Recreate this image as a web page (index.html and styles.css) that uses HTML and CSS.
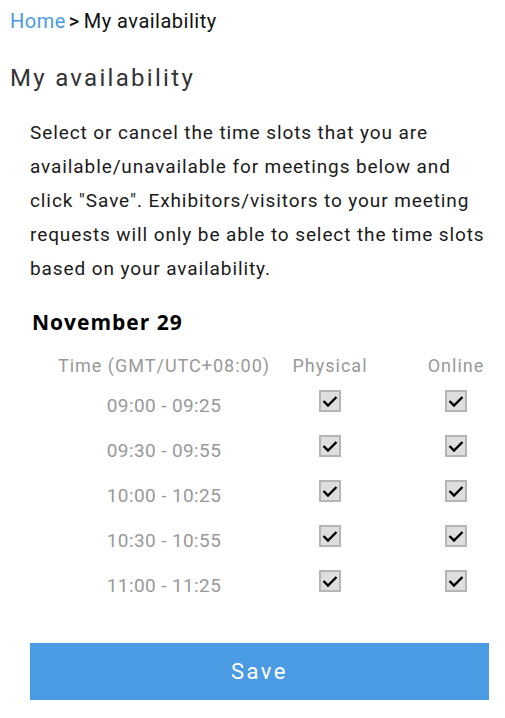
FILE: index.html
```html
<!DOCTYPE html>
<html lang="en">
<head>
    <meta charset="UTF-8">
    <title>My availability</title>
    <link rel="stylesheet" href="styles.css">
</head>
<body>
    <div class="breadcrumb">
        <a href="#" class="crumb-link">Home</a><span class="crumb-sep">&gt;</span><span class="crumb-current">My availability</span>
    </div>

    <h1 class="page-title">My availability</h1>

    <div class="content">
        <p class="intro">Select or cancel the time slots that you are available/unavailable for meetings below and click "Save". Exhibitors/visitors to your meeting requests will only be able to select the time slots based on your availability.</p>

        <h2 class="day-title">November 29</h2>

        <div class="slots">
            <div class="slot-row slot-head">
                <div class="cell">Time (GMT/UTC+08:00)</div>
                <div class="cell">Physical</div>
                <div class="cell cell-online">Online</div>
            </div>
            <div class="slot-row">
                <div class="cell time">09:00 - 09:25</div>
                <div class="cell"><span class="check"><svg viewBox="0 0 18 18"><polyline points="2.5,9 7,13.5 15.5,5"/></svg></span></div>
                <div class="cell cell-online"><span class="check"><svg viewBox="0 0 18 18"><polyline points="2.5,9 7,13.5 15.5,5"/></svg></span></div>
            </div>
            <div class="slot-row">
                <div class="cell time">09:30 - 09:55</div>
                <div class="cell"><span class="check"><svg viewBox="0 0 18 18"><polyline points="2.5,9 7,13.5 15.5,5"/></svg></span></div>
                <div class="cell cell-online"><span class="check"><svg viewBox="0 0 18 18"><polyline points="2.5,9 7,13.5 15.5,5"/></svg></span></div>
            </div>
            <div class="slot-row">
                <div class="cell time">10:00 - 10:25</div>
                <div class="cell"><span class="check"><svg viewBox="0 0 18 18"><polyline points="2.5,9 7,13.5 15.5,5"/></svg></span></div>
                <div class="cell cell-online"><span class="check"><svg viewBox="0 0 18 18"><polyline points="2.5,9 7,13.5 15.5,5"/></svg></span></div>
            </div>
            <div class="slot-row">
                <div class="cell time">10:30 - 10:55</div>
                <div class="cell"><span class="check"><svg viewBox="0 0 18 18"><polyline points="2.5,9 7,13.5 15.5,5"/></svg></span></div>
                <div class="cell cell-online"><span class="check"><svg viewBox="0 0 18 18"><polyline points="2.5,9 7,13.5 15.5,5"/></svg></span></div>
            </div>
            <div class="slot-row">
                <div class="cell time">11:00 - 11:25</div>
                <div class="cell"><span class="check"><svg viewBox="0 0 18 18"><polyline points="2.5,9 7,13.5 15.5,5"/></svg></span></div>
                <div class="cell cell-online"><span class="check"><svg viewBox="0 0 18 18"><polyline points="2.5,9 7,13.5 15.5,5"/></svg></span></div>
            </div>
        </div>

        <button class="save-button">Save</button>
    </div>
</body>
</html>
```

FILE: styles.css
```css
* {
    box-sizing: border-box;
    margin: 0;
    padding: 0;
}

body {
    font-family: Roboto, "Liberation Sans", sans-serif;
    background-color: #ffffff;
    color: #1a1a1a;
    width: 505px;
    height: 718px;
    overflow: hidden;
}

.breadcrumb {
    margin-top: 9px;
    padding-left: 10px;
    font-size: 20px;
    line-height: 24px;
    letter-spacing: 0.5px;
    display: flex;
    align-items: center;
}

.crumb-link {
    color: #4a9be3;
    text-decoration: none;
}

.crumb-sep {
    margin: 0 4px 0 3px;
    color: #111;
    font-weight: 500;
}

.crumb-current {
    color: #111;
}

.page-title {
    margin-top: 30px;
    padding-left: 10px;
    font-size: 24px;
    line-height: 30px;
    font-weight: 400;
    letter-spacing: 2.3px;
    color: #333;
}

.content {
    padding: 0 16px 0 30px;
}

.intro {
    margin-top: 23px;
    font-size: 19px;
    line-height: 34px;
    letter-spacing: 0.9px;
    color: #1a1a1a;
}

.day-title {
    margin-top: 22px;
    padding-left: 2px;
    font-family: "Open Sans", "Liberation Sans", sans-serif;
    font-size: 21px;
    line-height: 28px;
    font-weight: 700;
    letter-spacing: 1px;
    color: #000;
}

.slots {
    margin-top: 11px;
}

.slot-row {
    display: grid;
    grid-template-columns: 268px 64px 128px;
    height: 45px;
    align-items: center;
}

.slot-head {
    height: 36px;
    font-size: 18px;
    letter-spacing: 1px;
    color: #999;
}

.cell {
    display: flex;
    justify-content: center;
    white-space: nowrap;
}

.cell-online {
    padding-left: 60px;
}

.time {
    font-size: 19px;
    letter-spacing: 0.4px;
    color: #999;
}

.check {
    display: block;
    width: 22px;
    height: 22px;
    margin-top: -10px;
    background-color: #dedede;
    border: 2px solid #b5b5b5;
}

.check svg {
    display: block;
    width: 18px;
    height: 18px;
    fill: none;
    stroke: #000;
    stroke-width: 2.4;
}

.save-button {
    display: block;
    width: 459px;
    height: 57px;
    margin-top: 35px;
    border: none;
    background-color: #4a9be3;
    color: #fff;
    font-family: Roboto, "Liberation Sans", sans-serif;
    font-size: 22px;
    letter-spacing: 2.5px;
    cursor: pointer;
}
```
